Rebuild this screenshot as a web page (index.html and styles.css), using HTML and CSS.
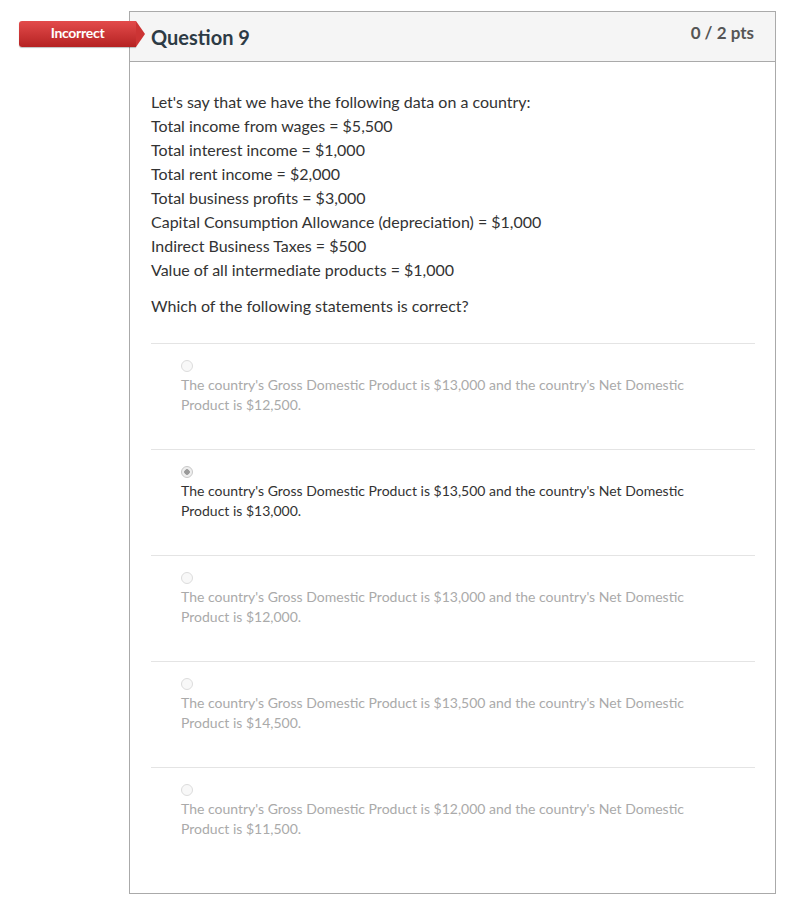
FILE: index.html
```html
<!DOCTYPE html>
<html lang="en">
<head>
  <meta charset="UTF-8">
  <meta name="viewport" content="width=device-width, initial-scale=1.0">
  <title>Question 9</title>
  <link rel="stylesheet" href="styles.css">
</head>
<body>
  <div class="quiz">
    <div class="badge">Incorrect</div>
    <div class="question">
      <div class="header">
        <h2>Question 9</h2>
        <span class="points">0 / 2 pts</span>
      </div>
      <div class="body">
        <div class="text">
          <p>Let's say that we have the following data on a country:<br>
          Total income from wages = $5,500<br>
          Total interest income = $1,000<br>
          Total rent income = $2,000<br>
          Total business profits = $3,000<br>
          Capital Consumption Allowance (depreciation) = $1,000<br>
          Indirect Business Taxes = $500<br>
          Value of all intermediate products = $1,000</p>
          <p>Which of the following statements is correct?</p>
        </div>

        <div class="answers">
          <div class="answer">
            <span class="radio"></span>
            <div class="label">The country's Gross Domestic Product is $13,000 and the country's Net Domestic Product is $12,500.</div>
          </div>
          <div class="answer selected">
            <span class="radio"></span>
            <div class="label">The country's Gross Domestic Product is $13,500 and the country's Net Domestic Product is $13,000.</div>
          </div>
          <div class="answer">
            <span class="radio"></span>
            <div class="label">The country's Gross Domestic Product is $13,000 and the country's Net Domestic Product is $12,000.</div>
          </div>
          <div class="answer">
            <span class="radio"></span>
            <div class="label">The country's Gross Domestic Product is $13,500 and the country's Net Domestic Product is $14,500.</div>
          </div>
          <div class="answer">
            <span class="radio"></span>
            <div class="label">The country's Gross Domestic Product is $12,000 and the country's Net Domestic Product is $11,500.</div>
          </div>
        </div>
      </div>
    </div>
  </div>
</body>
</html>
```

FILE: styles.css
```css
body {
  margin: 0;
  font-family: Lato, "Open Sans", sans-serif;
  color: #2d3b45;
  background: #fff;
}

.quiz {
  position: relative;
  padding: 11px 0 0 129px;
}

.badge {
  position: absolute;
  left: 19px;
  top: 21px;
  width: 117px;
  height: 26px;
  line-height: 24px;
  text-align: center;
  color: #fff;
  font-size: 14px;
  font-weight: bold;
  letter-spacing: -0.3px;
  background: linear-gradient(#e34b4b, #b52222);
  border-radius: 3px 0 0 3px;
  box-shadow: 0 1px 1px rgba(0,0,0,0.25);
}

.badge::after {
  content: "";
  position: absolute;
  right: -9px;
  top: 0;
  border-top: 13px solid transparent;
  border-bottom: 13px solid transparent;
  border-left: 9px solid #cc3434;
}

.question {
  width: 645px;
  border: 1px solid #aaa;
}

.header {
  display: flex;
  justify-content: space-between;
  align-items: center;
  height: 49px;
  padding: 0 21px 0 21px;
  background: #f5f5f5;
  border-bottom: 1px solid #aaa;
}

.header h2 {
  margin: 0;
  font-size: 20px;
  font-weight: bold;
  color: #2d3b45;
}

.points {
  margin-top: -8px;
  font-size: 17px;
  font-weight: bold;
  color: #555;
}

.body {
  padding: 28px 20px 20px 21px;
}

.text p {
  margin: 0 0 12px;
  font-size: 16px;
  line-height: 24px;
  color: #333;
}

.text p:last-child {
  margin-bottom: 0;
}

.answers {
  margin-top: 25px;
}

.answer {
  border-top: 1px solid #e4e4e4;
  padding: 16px 40px 34px 30px;
  font-size: 14px;
  line-height: 20px;
  color: #aaa;
}

.answer.selected {
  color: #333;
}

.radio {
  display: block;
  box-sizing: border-box;
  width: 12px;
  height: 12px;
  margin-bottom: 3px;
  border: 1px solid #dcdcdc;
  border-radius: 50%;
  background: #f8f8f8;
}

.answer.selected .radio {
  border-color: #c8c8c8;
  background: radial-gradient(circle, #9a9a9a 0 2.5px, #eee 3px);
}
```
